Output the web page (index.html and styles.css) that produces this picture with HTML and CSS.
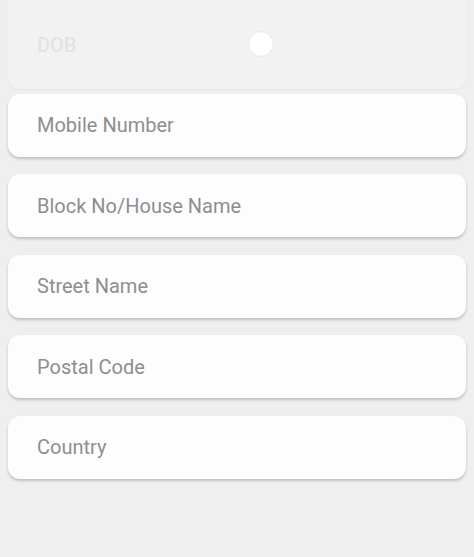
FILE: index.html
```html
<!DOCTYPE html>
<html lang="en">
<head>
  <meta charset="UTF-8" />
  <meta name="viewport" content="width=device-width, initial-scale=1.0" />
  <title>Address Details</title>
  <link rel="stylesheet" href="styles.css">
</head>
<body>
  <form class="address-form">
    <div class="field field-dob">
      <span class="dob-label">DOB</span>
      <span class="dob-dot"></span>
    </div>

    <input class="field" type="tel" placeholder="Mobile Number" />
    <input class="field" type="text" placeholder="Block No/House Name" />
    <input class="field" type="text" placeholder="Street Name" />
    <input class="field" type="text" placeholder="Postal Code" />
    <input class="field" type="text" placeholder="Country" />
  </form>
</body>
</html>
```

FILE: styles.css
```css
body {
  margin: 0;
  background-color: #efefef;
  font-family: Roboto, 'Noto Sans', sans-serif;
}

.address-form {
  display: flex;
  flex-direction: column;
  gap: 17.5px;
  padding: 0 8px 20px;
}

.field {
  box-sizing: border-box;
  height: 63px;
  width: 100%;
  padding: 0 29px;
  border: none;
  border-radius: 12px;
  background-color: #fdfdfe;
  box-shadow: 0 2px 3px rgba(0, 0, 0, 0.2);
  font-family: inherit;
  font-size: 20px;
  color: #555;
  outline: none;
}

.field::placeholder {
  color: #8e8e8e;
}

.field-dob {
  height: 89px;
  margin-bottom: -13px;
  border-radius: 0 0 12px 12px;
  background-color: #f2f2f2;
  box-shadow: 0 1px 2px rgba(0, 0, 0, 0.04);
  display: flex;
  align-items: center;
  position: relative;
}

.dob-label {
  color: #e3e3e3;
  font-size: 20px;
  font-weight: 500;
}

.dob-dot {
  position: absolute;
  left: 240px;
  top: 31px;
  width: 24px;
  height: 24px;
  border-radius: 50%;
  background-color: #fff;
  border: 1px solid #ecebd6;
}
```
